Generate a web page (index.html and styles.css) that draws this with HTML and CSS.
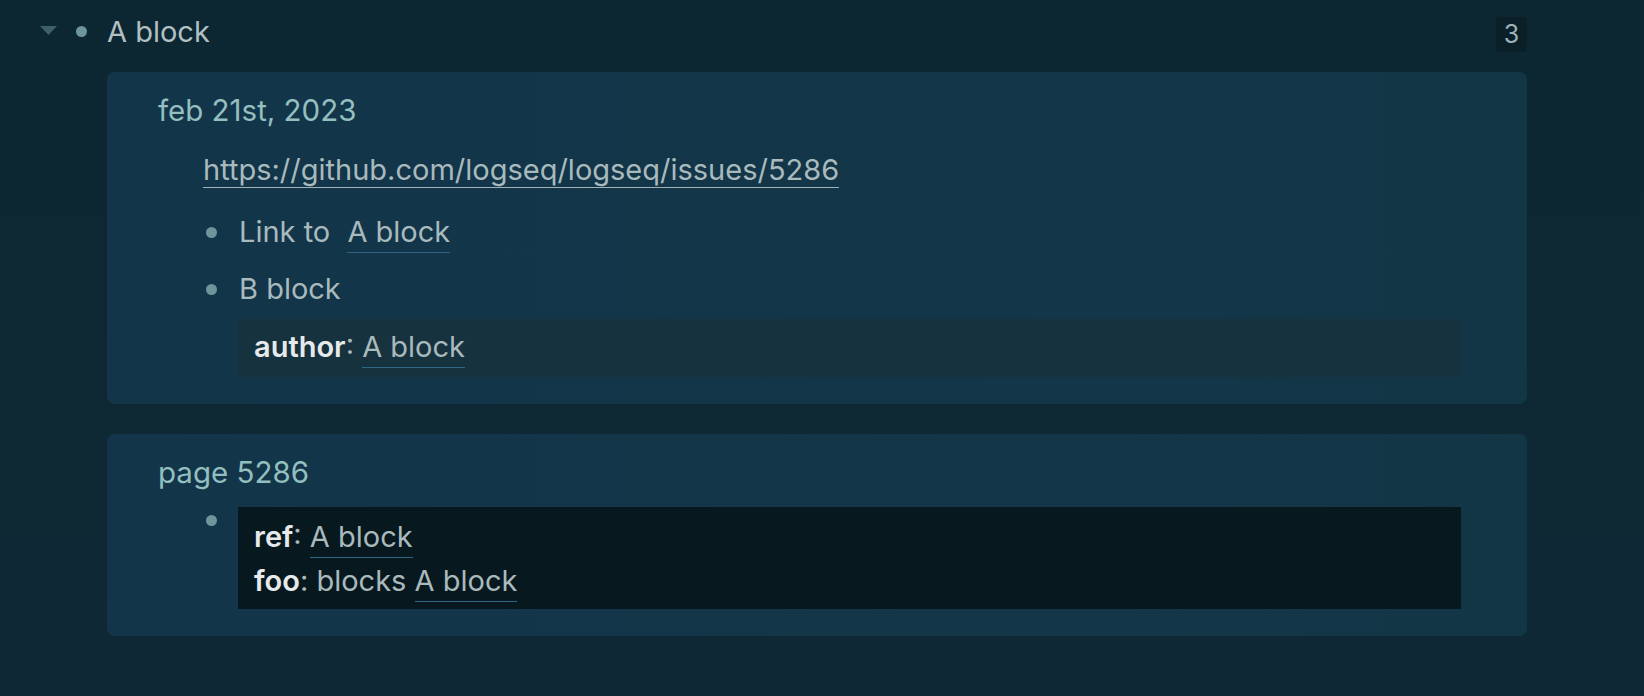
FILE: index.html
```html
<!DOCTYPE html>
<html lang="en">
<head>
<meta charset="utf-8">
<title>A block</title>
<link rel="stylesheet" href="styles.css">
</head>
<body>
<div class="page">
  <div class="main-row">
    <span class="toggle"><svg width="17" height="9" viewBox="0 0 17 9"><path d="M0 0 L17 0 L8.5 9 Z" fill="#3e5f66"/></svg></span>
    <span class="bullet"></span>
    <span class="main-title">A block</span>
    <span class="badge">3</span>
  </div>
  <div class="refs">
    <section class="card">
      <div class="card-title">feb 21st, 2023</div>
      <div class="url-line"><a class="url">https://github.com/logseq/logseq/issues/5286</a></div>
      <div class="block block-link">
        <span class="dot"></span>
        <span class="block-text">Link to <span class="ref ref-gap">A block</span></span>
      </div>
      <div class="block block-b">
        <span class="dot"></span>
        <span class="block-text">B block</span>
      </div>
      <div class="props props-light">
        <div class="prop"><b class="key">author</b>: <span class="ref">A block</span></div>
      </div>
    </section>
    <section class="card card-second">
      <div class="card-title">page 5286</div>
      <div class="block block-props">
        <span class="dot dot-top"></span>
        <div class="props props-dark">
          <div class="prop"><b class="key">ref</b>: <span class="ref">A block</span></div>
          <div class="prop"><b class="key">foo</b>: blocks <span class="ref">A block</span></div>
        </div>
      </div>
    </section>
  </div>
</div>
</body>
</html>
```

FILE: styles.css
```css
html, body {
  margin: 0;
  padding: 0;
}
body {
  background: linear-gradient(180deg, #0d2732 0%, #0e2935 100%);
  min-height: 696px;
  font-family: "Inter", "Noto Sans", sans-serif;
  font-size: 29px;
  color: #a9babd;
}
.page {
  padding: 7px 0 0 40px;
  width: 1487px;
}
.main-row {
  display: flex;
  align-items: center;
  height: 50px;
  line-height: 50px;
}
.toggle {
  width: 17px;
  height: 9px;
  margin-right: 19px;
  display: flex;
  margin-top: -3px;
}
.toggle svg { display: block; }
.bullet {
  width: 11px;
  height: 11px;
  border-radius: 50%;
  background: #6d959a;
  margin-right: 20px;
  margin-top: -2px;
}
.main-title {
  flex: 1;
  color: #b0c0c3;
}
.badge {
  width: 31px;
  height: 35px;
  line-height: 35px;
  border-radius: 4px;
  background: #0a1f28;
  color: #9fb2b6;
  font-size: 25px;
  text-align: center;
  align-self: flex-start;
  margin-top: 10px;
}
.refs {
  margin: 15px 0 0 67px;
  width: 1420px;
  display: flex;
  flex-direction: column;
  gap: 30px;
}
.card {
  background: linear-gradient(90deg, #12354a 0%, #133647 100%);
  border-radius: 8px;
  padding: 13px 66px 27px 51px;
  line-height: 50px;
}
.card-title {
  color: #94bfbf;
  height: 50px;
  font-size: 29.5px;
}
.url-line {
  margin: 10px 0 0 45px;
}
.url {
  color: #a9babd;
  border-bottom: 1px solid #9fb2b6;
  text-decoration: none;
}
.block {
  display: flex;
  align-items: center;
  margin-left: 48px;
}
.block-link { margin-top: 12px; height: 50px; }
.block-b { margin-top: 7px; height: 50px; }
.dot {
  width: 11px;
  height: 11px;
  border-radius: 50%;
  background: #6d959a;
  margin-right: 22px;
  flex: none;
}
.ref {
  color: #a9babd;
  border-bottom: 1px solid #2e6683;
  padding-bottom: 3px;
}
.ref-gap {
  margin-left: 9px;
}
.props {
  padding: 0 16px;
}
.props-light {
  background: #16323e;
  margin: 5px 0 0 80px;
  padding-top: 3px;
  padding-bottom: 5px;
}
.key {
  color: #e6eaeb;
  font-weight: 600;
}
.block-props {
  align-items: flex-start;
  margin-top: 10px;
}
.dot-top {
  margin-top: 8px;
  margin-right: 21px;
}
.props-dark {
  flex: 1;
  background: #08181f;
  line-height: 44px;
  padding-top: 8px;
  padding-bottom: 6px;
}
```
